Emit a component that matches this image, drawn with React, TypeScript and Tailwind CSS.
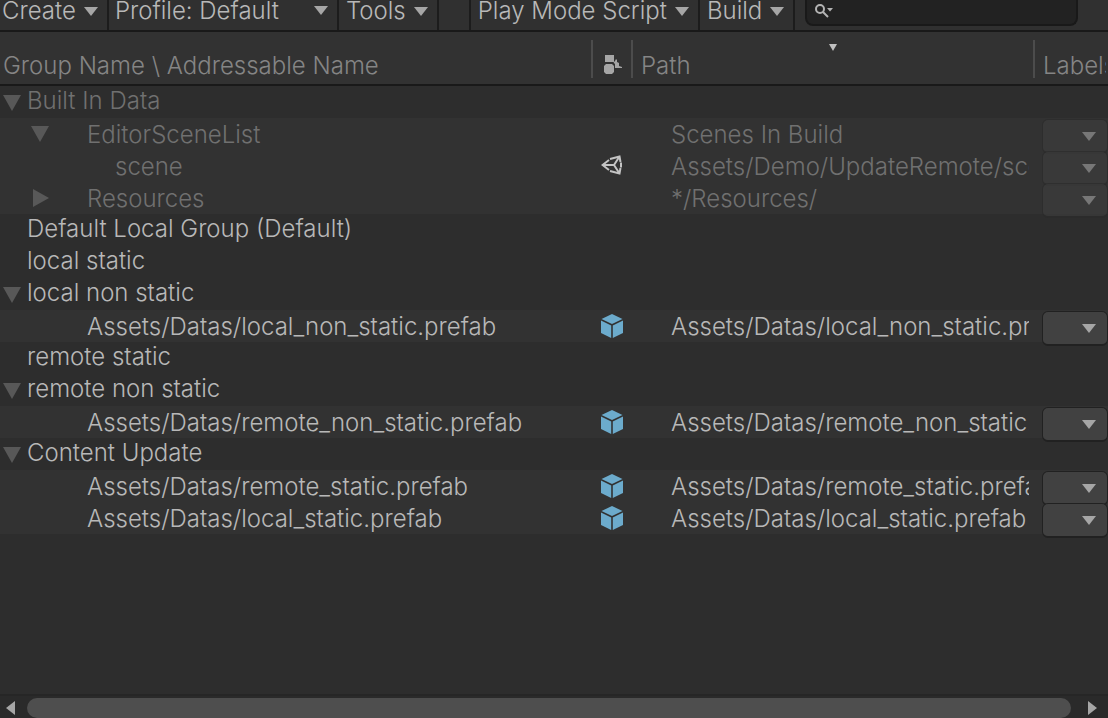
import { useState } from "react";
import clsx from "clsx";

type Kind = "scene" | "prefab";

interface Row {
  name: string;
  level: "group" | "entry" | "child";
  path?: string;
  kind?: Kind;
  foldout?: "open" | "closed";
  disabled?: boolean;
}

const rows: Row[] = [
  { name: "Built In Data", level: "group", foldout: "open", disabled: true },
  { name: "EditorSceneList", level: "entry", path: "Scenes In Build", foldout: "open", disabled: true },
  { name: "scene", level: "child", path: "Assets/Demo/UpdateRemote/scene.unity", kind: "scene", disabled: true },
  { name: "Resources", level: "entry", path: "*/Resources/", foldout: "closed", disabled: true },
  { name: "Default Local Group (Default)", level: "group" },
  { name: "local static", level: "group" },
  { name: "local non static", level: "group", foldout: "open" },
  { name: "Assets/Datas/local_non_static.prefab", level: "entry", path: "Assets/Datas/local_non_static.prefab", kind: "prefab" },
  { name: "remote static", level: "group" },
  { name: "remote non static", level: "group", foldout: "open" },
  { name: "Assets/Datas/remote_non_static.prefab", level: "entry", path: "Assets/Datas/remote_non_static.prefab", kind: "prefab" },
  { name: "Content Update", level: "group", foldout: "open" },
  { name: "Assets/Datas/remote_static.prefab", level: "entry", path: "Assets/Datas/remote_static.prefab", kind: "prefab" },
  { name: "Assets/Datas/local_static.prefab", level: "entry", path: "Assets/Datas/local_static.prefab", kind: "prefab" },
];

const Caret = ({ className }: { className?: string }) => (
  <svg viewBox="0 0 14 9" className={clsx("h-[9px] w-[14px] shrink-0 fill-[#a6a6a6]", className)} aria-hidden="true">
    <path d="M0 0h14L7 9z" />
  </svg>
);

const SceneIcon = () => (
  <svg viewBox="0 0 22 22" className="h-[22px] w-[22px]" fill="none" stroke="#c4c4c4" strokeWidth="2" aria-label="Scene">
    <path d="M2 10h11M13 10l5.500-8.500M13 10l5.500 8.500" />
    <path d="M8 5L1.500 10 8 15M9 4l9.500-2.500L19.500 7M9 16l9.500 2.500L19.500 13M20 7.500v5" />
  </svg>
);

const PrefabIcon = () => (
  <svg viewBox="0 0 22 24" className="h-6 w-[22px] fill-[#6cabcc]" aria-label="Prefab">
    <path d="M11 0l10.500 5L11 10 .5 5z" />
    <path d="M0 6.500l10.200 5V24L0 19z" />
    <path d="M22 6.500l-10.200 5V24L22 19z" />
  </svg>
);

const TypeIcon = () => (
  <svg viewBox="0 0 18 20" className="h-5 w-[18px] fill-[#a6a6a6]" aria-label="Asset type">
    <path d="M1 0h9v7H1z" />
    <path d="M3 9h5l2 2v6l-2 2H2l-2-2v-6l2-2z" />
    <path d="M12 4l1 1v2l2 1v3l3 1v1h-7V9L9.500 7.500 11 6z" />
  </svg>
);

const MenuButton = ({ label }: { label: string }) => (
  <button className="flex h-full items-center gap-2 border-r-2 border-[#1c1c1c] pr-[9px] pb-2 pl-[7px] leading-[22px] whitespace-nowrap first:pl-0.5">
    {label}
    <Caret />
  </button>
);

const Toolbar = () => (
  <div className="flex h-8 shrink-0 border-b-2 border-[#191919] bg-[#303030]">
    <MenuButton label="Create" />
    <div className="relative h-full w-[230px] border-r-2 border-[#1c1c1c]">
      <select
        aria-label="Profile"
        className="block h-full w-full appearance-none bg-transparent pr-8 pb-2 pl-1.5 leading-[22px] outline-none"
      >
        <option>Profile: Default</option>
      </select>
      <Caret className="pointer-events-none absolute top-[6px] right-[9px]" />
    </div>
    <MenuButton label="Tools" />
    <div className="w-8 border-r-2 border-[#1c1c1c]" />
    <MenuButton label="Play Mode Script" />
    <MenuButton label="Build" />
    <div className="relative mr-[30px] ml-2.5 h-[26px] min-w-0 flex-1">
      <input
        type="text"
        aria-label="Search"
        className="block h-full w-full rounded-b-lg border-2 border-t-0 border-[#191919] bg-[#222222] pl-8 text-xl leading-6 outline-none"
      />
      <svg viewBox="0 0 19 15" className="pointer-events-none absolute top-1 left-[9px] h-[15px] w-[19px]" aria-hidden="true">
        <circle cx="6" cy="5" r="4" fill="none" stroke="#b4b4b4" strokeWidth="2" />
        <path d="M9 8l5 5" stroke="#b4b4b4" strokeWidth="2" />
        <path d="M13 4h6l-3 3.500z" fill="#b4b4b4" />
      </svg>
    </div>
  </div>
);

const LabelSelect = ({ name, disabled }: { name: string; disabled?: boolean }) => (
  <div className="h-8 pt-px">
    <div className={clsx("relative h-[35px]", disabled && "opacity-60")}>
      <select
        aria-label={`Labels for ${name}`}
        disabled={disabled}
        className="block h-full w-full appearance-none rounded-md border border-b-2 border-[#212121] bg-[#414141] opacity-100 outline-none disabled:border-[#2a2a2a] disabled:bg-[#3e3e3e]"
      >
        <option value=""></option>
      </select>
      <Caret className="pointer-events-none absolute top-[13px] right-3" />
    </div>
  </div>
);

const indent = { group: "pl-[27px]", entry: "pl-[87px]", child: "pl-[115px]" };

const AssetRow = ({ row }: { row: Row }) => {
  const [open, setOpen] = useState(row.foldout === "open");
  const isGroup = row.level === "group";

  return (
    <tr className={clsx("h-8", !isGroup && "bg-[#323232]", row.disabled ? "text-[#707070]" : "text-[#b8b8b8]")}>
      <td className="relative p-0">
        {row.foldout && (
          <button
            aria-label={`Toggle ${row.name}`}
            onClick={() => setOpen(!open)}
            className={clsx("absolute flex size-5 items-center justify-center", isGroup ? "top-[7px] left-[2px]" : "top-[6px] left-[30px]")}
          >
            <svg viewBox="0 0 18 18" className="size-[18px] fill-[#585858]" aria-hidden="true">
              <path d={open ? "M0 1h18L9 17z" : "M2 0v18l16-9z"} />
            </svg>
          </button>
        )}
        <div className={clsx("h-8 overflow-hidden whitespace-nowrap", indent[row.level], isGroup ? "leading-[30px]" : "leading-[34px]")}>
          {row.name}
        </div>
      </td>
      <td className="p-0">
        <div className="flex h-8 items-center justify-center">
          {row.kind === "scene" && <SceneIcon />}
          {row.kind === "prefab" && <PrefabIcon />}
        </div>
      </td>
      <td className="p-0 pr-[5px] pl-[39px]">
        <div className="h-8 overflow-hidden leading-[34px] whitespace-nowrap">{row.path}</div>
      </td>
      <td className="p-0 pl-2">{!isGroup && <LabelSelect name={row.name} disabled={row.disabled} />}</td>
    </tr>
  );
};

const headCell = "relative h-[52px] p-0 text-left font-light";
const headText = "h-[52px] overflow-hidden pt-[18px] leading-8 whitespace-nowrap";
const divider = "absolute top-2 -right-px h-[38px] w-0.5 bg-[#4c4c4c]";

const AssetTable = () => (
  <table className="w-full table-fixed border-collapse">
    <colgroup>
      <col />
      <col className="w-10" />
      <col className="w-[402px]" />
      <col className="w-[74px]" />
    </colgroup>
    <thead className="bg-[#323232] text-[#858585] shadow-[0_2px_0_#191919]">
      <tr>
        <th className={headCell}>
          <div className={clsx(headText, "pl-[3px]")}>Group Name \ Addressable Name</div>
          <span className={divider} />
        </th>
        <th className={headCell}>
          <div className="flex h-[52px] items-end justify-center pb-[9px] pl-0.5">
            <TypeIcon />
          </div>
          <span className={divider} />
        </th>
        <th className={headCell}>
          <div className={clsx(headText, "pl-[9px]")}>Path</div>
          <svg viewBox="0 0 8 7" className="absolute inset-x-0 top-3 mx-auto h-[7px] w-2 fill-[#c0c0c0]" aria-hidden="true">
            <path d="M0 0h8L4 7z" />
          </svg>
          <span className={divider} />
        </th>
        <th className={headCell}>
          <div className={clsx(headText, "mr-0.5 pl-[9px]")}>Labels</div>
        </th>
      </tr>
    </thead>
    <tbody className="before:block before:h-0.5 before:content-['']">
      {rows.map((row, i) => (
        <AssetRow key={i} row={row} />
      ))}
    </tbody>
  </table>
);

const ScrollBar = () => (
  <div className="flex h-6 shrink-0 items-center border-t-2 border-[#262626] bg-[#2a2a2a] pt-0.5 text-[#a6a6a6]">
    <button aria-label="Scroll left" className="flex w-[27px] pl-1.5">
      <svg viewBox="0 0 9 14" className="h-3.5 w-[9px] fill-current"><path d="M9 0v14L0 7z" /></svg>
    </button>
    <div className="h-5 flex-1 rounded-full bg-[#4e4e4e]" />
    <button aria-label="Scroll right" className="flex w-[37px] pl-[17px]">
      <svg viewBox="0 0 9 14" className="h-3.5 w-[9px] fill-current"><path d="M0 0v14l9-7z" /></svg>
    </button>
  </div>
);

const App = () => (
  <div className="flex h-screen flex-col overflow-hidden bg-[#2d2d2d] font-[Inter,sans-serif] text-2xl leading-8 font-light text-[#b8b8b8]">
    <Toolbar />
    <main className="min-h-0 flex-1 overflow-hidden">
      <AssetTable />
    </main>
    <ScrollBar />
  </div>
);

export default App;
